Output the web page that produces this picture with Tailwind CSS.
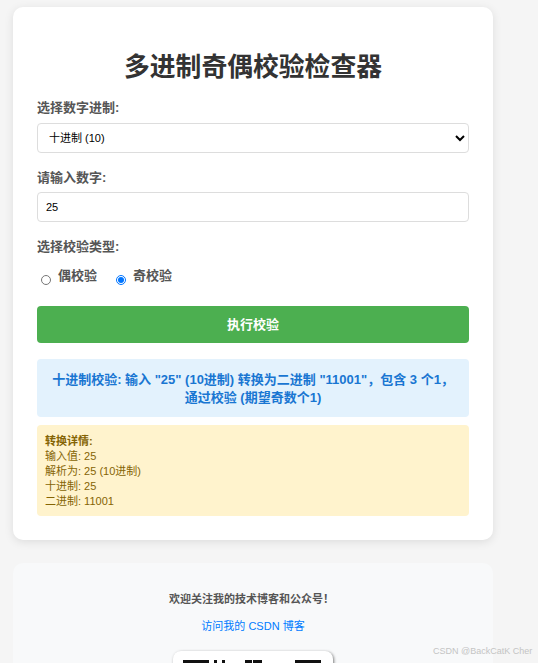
<!DOCTYPE html>
<html lang="zh-CN">
<head>
  <meta charset="UTF-8" />
  <title>多进制奇偶校验检查器</title>
  <script src="https://cdn.jsdelivr.net/npm/@tailwindcss/browser@4"></script>
</head>
<body class="h-[663px] overflow-hidden relative bg-[#f5f5f5] pl-[13px] pt-[7px] font-['Liberation_Sans','Noto_Sans_CJK_SC',sans-serif]">

  <!-- Main card -->
  <div class="w-[480px] h-[533px] bg-white rounded-[10px] shadow-[0_2px_10px_rgba(0,0,0,0.1)] px-6 pt-[41px]">
    <h1 class="text-[25.8px] leading-[38px] font-bold text-center text-[#333] mb-[13px]">多进制奇偶校验检查器</h1>

    <label class="block text-[13px] leading-[18px] font-bold text-[#555] mb-[6px]">选择数字进制:</label>
    <select class="block w-full h-[30px] border border-[#ddd] rounded-[4px] bg-white text-[11px] text-black pl-[7px] mb-[16px]">
      <option>十进制 (10)</option>
    </select>

    <label class="block text-[13px] leading-[18px] font-bold text-[#555] mb-[5px]">请输入数字:</label>
    <input type="text" value="25" class="block w-full h-[30px] border border-[#ddd] rounded-[4px] bg-white text-[11px] text-black px-2 mb-[16px]" />

    <label class="block text-[13px] leading-[18px] font-bold text-[#555] mb-[10px]">选择校验类型:</label>
    <div class="flex items-center h-[20px] mb-[20px] pl-[4px]">
      <input type="radio" name="parity" class="w-[10px] h-[10px] mt-[7px] mr-[7px] accent-[#0075ff]" />
      <span class="text-[13px] font-bold text-[#555] mr-[19px]">偶校验</span>
      <input type="radio" name="parity" checked class="w-[10px] h-[10px] mt-[7px] mr-[7px] accent-[#0075ff]" />
      <span class="text-[13px] font-bold text-[#555]">奇校验</span>
    </div>

    <button class="block w-full h-[37px] bg-[#4caf50] text-white text-[13px] font-bold rounded-[4px] mb-[16px]">执行校验</button>

    <div class="h-[58px] bg-[#e3f2fd] text-[#1976d2] rounded-[4px] text-[13px] leading-[18px] font-bold text-center px-2 pt-[12px] mb-[8px]">
      十进制校验: 输入 "25" (10进制) 转换为二进制 "11001"&#65292;包含 3 个1&#65292;<br />通过校验 (期望奇数个1)
    </div>

    <div class="h-[91px] bg-[#fff3cd] text-[#856404] rounded-[4px] text-[11px] leading-[15px] px-2 pt-[9px]">
      <div class="font-bold">转换详情:</div>
      <div>输入值: 25</div>
      <div>解析为: 25 (10进制)</div>
      <div>十进制: 25</div>
      <div>二进制: 11001</div>
    </div>
  </div>

  <!-- Footer card -->
  <div class="w-[480px] h-[200px] mt-[23px] bg-[#f8f9fa] rounded-[10px] pt-[28px] text-center">
    <p class="text-[11px] leading-[16px] font-bold text-[#555] pr-[3px]">欢迎关注我的技术博客和公众号&#65281;</p>
    <a class="block mt-[11px] text-[11px] leading-[16px] text-[#007bff]">访问我的 CSDN 博客</a>
    <div class="w-[160px] h-[120px] mx-auto mt-[17px] bg-white rounded-[8px] shadow-[1px_1px_3px_rgba(0,0,0,0.5)] pt-[9px]">
      <svg class="ml-[10px]" width="142" height="20" viewBox="0 0 142 20">
        <rect x="0" y="0" width="26" height="3" fill="#111" />
        <rect x="31" y="0" width="3" height="3" fill="#111" />
        <rect x="39" y="0" width="3" height="3" fill="#111" />
        <rect x="62" y="0" width="7" height="3" fill="#111" />
        <rect x="70" y="0" width="9" height="3" fill="#111" />
        <rect x="112" y="0" width="26" height="3" fill="#111" />
      </svg>
    </div>
  </div>

  <div class="absolute left-[433px] top-[645px] text-[9px] leading-[12px] text-[#c4c4c4] whitespace-nowrap">CSDN @BackCatK Cher</div>
</body>
</html>
